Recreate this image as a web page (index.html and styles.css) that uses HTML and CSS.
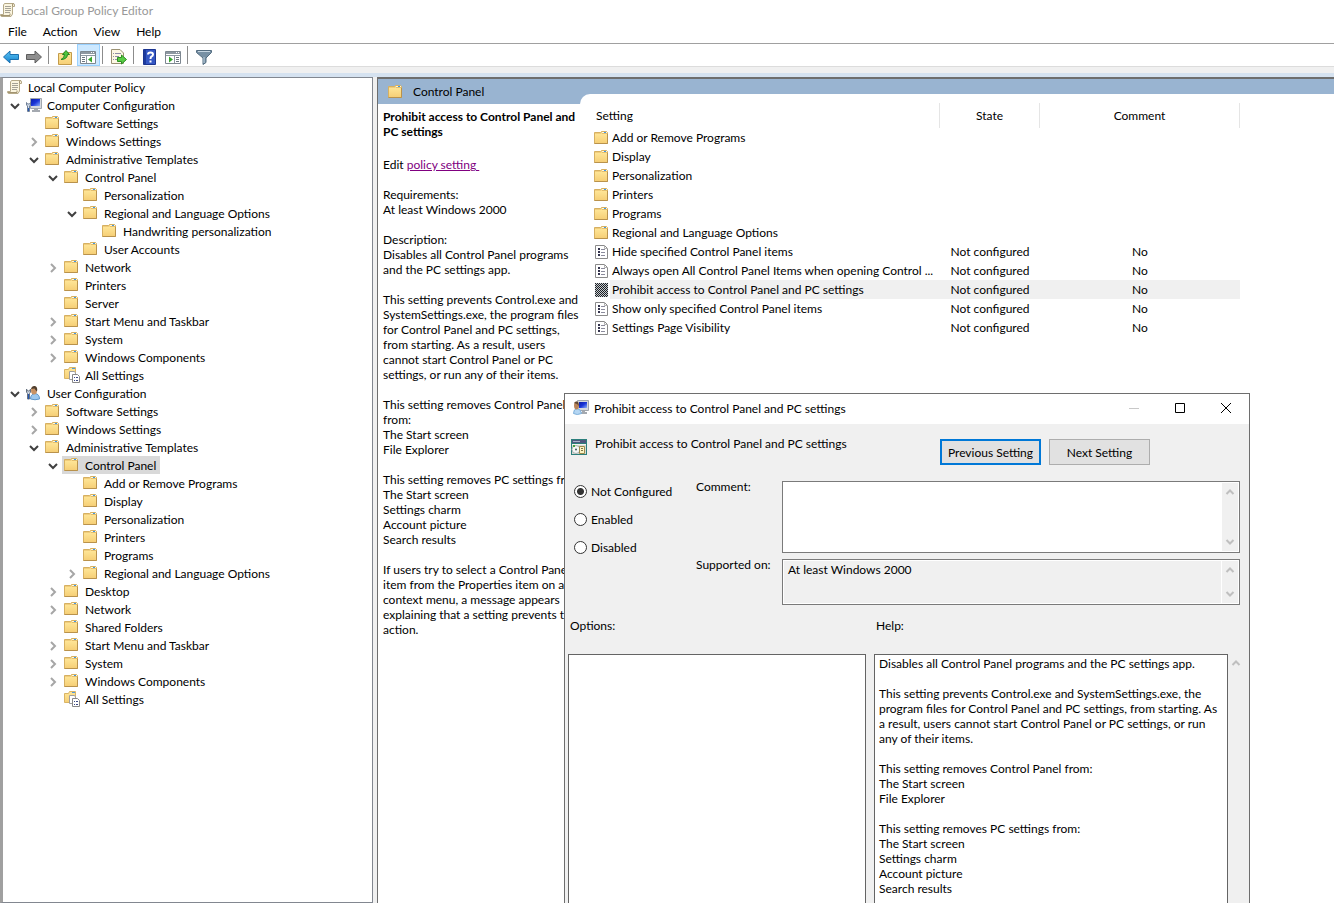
FILE: index.html
```html
<!DOCTYPE html>
<html lang="en">
<head>
    <meta charset="UTF-8">
    <meta name="viewport" content="width=device-width, initial-scale=1.0">
    <title>Local Group Policy Editor</title>
    <link rel="stylesheet" href="styles.css">
</head>
<body>
    <!-- shared icons -->
    <svg class="sprite" aria-hidden="true">
        <defs>
            <linearGradient id="folder-fill" x1="0" y1="0" x2="0" y2="1">
                <stop offset="0" stop-color="#ffe799"/>
                <stop offset="1" stop-color="#f6cf76"/>
            </linearGradient>
            <linearGradient id="blue-fill" x1="0" y1="0" x2="0" y2="1">
                <stop offset="0" stop-color="#5cc4f4"/>
                <stop offset="1" stop-color="#1583cf"/>
            </linearGradient>
            <linearGradient id="screen-fill" x1="0" y1="0" x2="1" y2="1">
                <stop offset="0" stop-color="#0a1fa8"/>
                <stop offset="0.5" stop-color="#1a35d8"/>
                <stop offset="1" stop-color="#8fb4f8"/>
            </linearGradient>
            <pattern id="dither" width="2" height="2" patternUnits="userSpaceOnUse">
                <rect width="1" height="1" fill="#222"/>
                <rect x="1" y="1" width="1" height="1" fill="#222"/>
            </pattern>
        </defs>
        <symbol id="folder" viewBox="0 0 16 16">
            <path d="M0.5 2.5H6.5L7.5 1.500H12.5L13.5 2.500V13.500H0.5Z" fill="#f0cd7c" stroke="#d6b062"/>
            <path d="M8 2H13V3H8Z" fill="#fff8dc"/>
            <path d="M10 2H12V3H10Z" fill="#3f97e6"/>
            <path d="M1 4H7L8 3H13V13H1Z" fill="url(#folder-fill)"/>
            <path d="M8 3.500H13" stroke="#e3bd6c"/>
            <path d="M0.5 13.500H13.5V4" fill="none" stroke="#b9924c"/>
        </symbol>
        <symbol id="scroll" viewBox="0 0 16 16">
            <path d="M4.5 1.5H13Q14.5 1.5 14.5 3V4.5H12.5V12L11 14.5H2Q0.5 14.5 0.5 13V12.5H3.5V3Z" fill="#fbf5df" stroke="#b5a988"/>
            <path d="M12.5 4.5V3Q12.5 1.5 13.5 1.5M1 13.5H10V11.5" fill="none" stroke="#a39470"/>
            <path d="M5 4.5H11M5 6.5H11M5 8.5H11M5 10.5H10" stroke="#a5a296"/>
        </symbol>
        <symbol id="computer" viewBox="0 0 16 16">
            <path d="M4.5 1.5H15.5V11.5H4.500Z" fill="#d5d9de" stroke="#a0a6ad"/>
            <path d="M5 2H14V9H5Z" fill="url(#screen-fill)"/>
            <path d="M8 12H12V13H14V15H6V13H8Z" fill="#a4a9b0"/>
            <path d="M0.5 5.5V8L1.5 9V14.5H3.5V9L4.5 8V5.5L3.500 7H1.500Z" fill="#d5dfec" stroke="#6f7f96"/>
            <path d="M2 11H3V14H2Z" fill="#2457b5"/>
        </symbol>
        <symbol id="user" viewBox="0 0 16 16">
            <path d="M4.5 14Q4.500 9 9 8.500Q13.500 9 13.500 14Q9 15.500 4.500 14Z" fill="#9cc8ee" stroke="#5f96c8"/>
            <ellipse cx="8" cy="5.500" rx="3" ry="4" fill="#c89263"/>
            <path d="M5 4Q6 0.500 9 1Q12 2 11 6.500L9.500 5L8.500 3.500Z" fill="#51402f"/>
            <path d="M0.500 4V7L1.500 8.500V14H3.500V8.500L4.500 7V4L3.500 6H1.500Z" fill="#d2dae6" stroke="#66717f"/>
            <path d="M2 9H3V14H2Z" fill="#2457b5"/>
        </symbol>
        <symbol id="all-settings" viewBox="0 0 16 16">
            <path d="M0.500 2.500H4.500L5.500 0.500H11.500V11.500H0.500Z" fill="url(#folder-fill)" stroke="#d9b465"/>
            <path d="M8 1H11V2H8Z" fill="#4f9be0"/>
            <path d="M5.500 4.500H10.500L11.500 6V12.500H5.500Z" fill="#fff" stroke="#9f9f9f"/>
            <path d="M8.500 7.500H13.500L15.500 9.500V15.500H8.500Z" fill="#fff" stroke="#888"/>
            <path d="M10 10.500H11M12 10.500H14M10 13.500H11M12 13.500H14" stroke="#3e4a86"/>
        </symbol>
        <symbol id="policy" viewBox="0 0 14 16">
            <path d="M1.500 1.500H10.500L13.500 4.500V14.500H1.500Z" fill="#fff" stroke="#8a8a8a"/>
            <path d="M10.500 1.500V4.500H13.500" fill="none" stroke="#b0b0b0"/>
            <path d="M4 5H6M4 8H6M4 11H6" stroke="#33334c" stroke-width="2"/>
            <path d="M7 5.500H11M7 8.500H11M7 11.500H11" stroke="#8b8b9c"/>
        </symbol>
        <symbol id="policy-selected" viewBox="0 0 14 16">
            <path d="M1 1H14V15H1Z" fill="#c4ccd4"/>
            <path d="M1 1H14V15H1Z" fill="url(#dither)"/>
        </symbol>
        <symbol id="open" viewBox="0 0 10 10">
            <path d="M1 3L5 7L9 3" fill="none" stroke="#404040" stroke-width="2"/>
        </symbol>
        <symbol id="closed" viewBox="0 0 10 10">
            <path d="M3 1L7 5L3 9" fill="none" stroke="#a6a6a6" stroke-width="2"/>
        </symbol>
        <symbol id="arrow-up" viewBox="0 0 10 10">
            <path d="M1.500 7L5 3.500L8.500 7" fill="none" stroke="#bfbfbf" stroke-width="2"/>
        </symbol>
        <symbol id="arrow-down" viewBox="0 0 10 10">
            <path d="M1.500 3L5 6.500L8.500 3" fill="none" stroke="#bfbfbf" stroke-width="2"/>
        </symbol>
    </svg>

    <header>
        <div class="titlebar">
            <svg class="icon"><use href="#scroll"/></svg>
            <span>Local Group Policy Editor</span>
        </div>
        <nav class="menu">
            <a href="#">File</a>
            <a href="#">Action</a>
            <a href="#">View</a>
            <a href="#">Help</a>
        </nav>
        <div class="toolbar">
            <button type="button" aria-label="Back">
                <svg class="icon" viewBox="0 0 16 16"><path d="M0.500 8L7 2V5.500H15.500V10.500H7V14Z" fill="url(#blue-fill)" stroke="#1b6fae"/></svg>
            </button>
            <button type="button" aria-label="Forward">
                <svg class="icon" viewBox="0 0 16 16"><path d="M15.500 8L9 2V5.500H0.500V10.500H9V14Z" fill="#8e8e8e" stroke="#5d5d5d"/></svg>
            </button>
            <span class="separator"></span>
            <button type="button" aria-label="Up one level">
                <svg class="icon" viewBox="0 0 16 16">
                    <path d="M1.500 4.500H6L7 3.500H14.500V15.500H1.500Z" fill="url(#folder-fill)" stroke="#c39b4a"/>
                    <path d="M4 10.500Q7.500 9 7.500 5.500H5.500L9 1.500L12.500 5.500H10.500Q10 10.500 4 10.500Z" fill="#4fc53c" stroke="#24851c"/>
                </svg>
            </button>
            <button type="button" class="pressed" aria-label="Show console tree">
                <svg class="icon" viewBox="0 0 16 16">
                    <path d="M0.500 2.500H15.500V14.500H0.500Z" fill="#fff" stroke="#7d8790"/>
                    <path d="M1 3H15V5H1Z" fill="#8d97a1"/>
                    <path d="M11 3.500H12M13 3.500H14" stroke="#fff"/>
                    <path d="M1 6.500H15M6.500 7V14" stroke="#8d97a1"/>
                    <path d="M2 8.500H5M2 10.500H5M2 12.500H5" stroke="#6c7680"/>
                    <path d="M12 7.500V13.500L8 10.500Z" fill="#37a52c"/>
                </svg>
            </button>
            <span class="separator"></span>
            <button type="button" aria-label="Export list">
                <svg class="icon" viewBox="0 0 16 16">
                    <path d="M0.500 0.500H9L12.500 4V14.500H0.500Z" fill="#fdf8e4" stroke="#9b9274"/>
                    <path d="M2 4.500H3M4 4.500H10M2 7.500H3M4 7.500H8M2 10.500H3M4 10.500H8" stroke="#8e8ea6"/>
                    <path d="M6.500 8.500H10.500V6L15.500 10.500L10.500 15V12.500H6.500Z" fill="#58cc46" stroke="#2c9021"/>
                </svg>
            </button>
            <span class="separator"></span>
            <button type="button" aria-label="Help">
                <svg class="icon" viewBox="0 0 16 16">
                    <path d="M1.500 0.500H13.500V15.500H1.500Z" fill="#3457c4" stroke="#1c3590"/>
                    <path d="M2 1H4V15H2Z" fill="#1d3b9e"/>
                    <path d="M6 5.500Q6 3.500 8.500 3.500Q11 3.500 11 5.500Q11 7 9.500 7.500Q8.500 8 8.500 10M8.500 11.500V13.500" fill="none" stroke="#fff" stroke-width="2"/>
                </svg>
            </button>
            <button type="button" aria-label="Show action pane">
                <svg class="icon" viewBox="0 0 16 16">
                    <path d="M0.500 2.500H15.500V14.500H0.500Z" fill="#fff" stroke="#7d8790"/>
                    <path d="M1 3H15V5H1Z" fill="#8d97a1"/>
                    <path d="M11 3.500H12M13 3.500H14" stroke="#fff"/>
                    <path d="M1 6.500H15M9.500 7V14" stroke="#8d97a1"/>
                    <path d="M11 8.500H14M11 10.500H14M11 12.500H14" stroke="#6c7680"/>
                    <path d="M4 7.500V13.500L8 10.500Z" fill="#37a52c"/>
                </svg>
            </button>
            <span class="separator"></span>
            <button type="button" aria-label="Filter">
                <svg class="icon" viewBox="0 0 16 16">
                    <path d="M0.500 1.500H15.500V3.500L10 9V13.500L7 15.500V9L0.500 3.500Z" fill="#7790a4" stroke="#536c80"/>
                    <path d="M2 2.500H14" stroke="#c6d6e2"/>
                    <path d="M8 8V14" stroke="#bdd0de"/>
                </svg>
            </button>
        </div>
    </header>

    <main>
        <nav class="tree" aria-label="Console tree">
            <div class="node"><svg class="icon"><use href="#scroll"/></svg>Local Computer Policy</div>
            <ul>
                <li>
                    <div class="node"><button type="button" aria-label="Collapse"><svg><use href="#open"/></svg></button><svg class="icon"><use href="#computer"/></svg>Computer Configuration</div>
                    <ul>
                        <li><div class="node leaf"><svg class="icon"><use href="#folder"/></svg>Software Settings</div></li>
                        <li><div class="node"><button type="button" aria-label="Expand"><svg><use href="#closed"/></svg></button><svg class="icon"><use href="#folder"/></svg>Windows Settings</div></li>
                        <li>
                            <div class="node"><button type="button" aria-label="Collapse"><svg><use href="#open"/></svg></button><svg class="icon"><use href="#folder"/></svg>Administrative Templates</div>
                            <ul>
                                <li>
                                    <div class="node"><button type="button" aria-label="Collapse"><svg><use href="#open"/></svg></button><svg class="icon"><use href="#folder"/></svg>Control Panel</div>
                                    <ul>
                                        <li><div class="node leaf"><svg class="icon"><use href="#folder"/></svg>Personalization</div></li>
                                        <li>
                                            <div class="node"><button type="button" aria-label="Collapse"><svg><use href="#open"/></svg></button><svg class="icon"><use href="#folder"/></svg>Regional and Language Options</div>
                                            <ul>
                                                <li><div class="node leaf"><svg class="icon"><use href="#folder"/></svg>Handwriting personalization</div></li>
                                            </ul>
                                        </li>
                                        <li><div class="node leaf"><svg class="icon"><use href="#folder"/></svg>User Accounts</div></li>
                                    </ul>
                                </li>
                                <li><div class="node"><button type="button" aria-label="Expand"><svg><use href="#closed"/></svg></button><svg class="icon"><use href="#folder"/></svg>Network</div></li>
                                <li><div class="node leaf"><svg class="icon"><use href="#folder"/></svg>Printers</div></li>
                                <li><div class="node leaf"><svg class="icon"><use href="#folder"/></svg>Server</div></li>
                                <li><div class="node"><button type="button" aria-label="Expand"><svg><use href="#closed"/></svg></button><svg class="icon"><use href="#folder"/></svg>Start Menu and Taskbar</div></li>
                                <li><div class="node"><button type="button" aria-label="Expand"><svg><use href="#closed"/></svg></button><svg class="icon"><use href="#folder"/></svg>System</div></li>
                                <li><div class="node"><button type="button" aria-label="Expand"><svg><use href="#closed"/></svg></button><svg class="icon"><use href="#folder"/></svg>Windows Components</div></li>
                                <li><div class="node leaf"><svg class="icon"><use href="#all-settings"/></svg>All Settings</div></li>
                            </ul>
                        </li>
                    </ul>
                </li>
                <li>
                    <div class="node"><button type="button" aria-label="Collapse"><svg><use href="#open"/></svg></button><svg class="icon"><use href="#user"/></svg>User Configuration</div>
                    <ul>
                        <li><div class="node"><button type="button" aria-label="Expand"><svg><use href="#closed"/></svg></button><svg class="icon"><use href="#folder"/></svg>Software Settings</div></li>
                        <li><div class="node"><button type="button" aria-label="Expand"><svg><use href="#closed"/></svg></button><svg class="icon"><use href="#folder"/></svg>Windows Settings</div></li>
                        <li>
                            <div class="node"><button type="button" aria-label="Collapse"><svg><use href="#open"/></svg></button><svg class="icon"><use href="#folder"/></svg>Administrative Templates</div>
                            <ul>
                                <li>
                                    <div class="node"><button type="button" aria-label="Collapse"><svg><use href="#open"/></svg></button><span class="selected"><svg class="icon"><use href="#folder"/></svg>Control Panel</span></div>
                                    <ul>
                                        <li><div class="node leaf"><svg class="icon"><use href="#folder"/></svg>Add or Remove Programs</div></li>
                                        <li><div class="node leaf"><svg class="icon"><use href="#folder"/></svg>Display</div></li>
                                        <li><div class="node leaf"><svg class="icon"><use href="#folder"/></svg>Personalization</div></li>
                                        <li><div class="node leaf"><svg class="icon"><use href="#folder"/></svg>Printers</div></li>
                                        <li><div class="node leaf"><svg class="icon"><use href="#folder"/></svg>Programs</div></li>
                                        <li><div class="node"><button type="button" aria-label="Expand"><svg><use href="#closed"/></svg></button><svg class="icon"><use href="#folder"/></svg>Regional and Language Options</div></li>
                                    </ul>
                                </li>
                                <li><div class="node"><button type="button" aria-label="Expand"><svg><use href="#closed"/></svg></button><svg class="icon"><use href="#folder"/></svg>Desktop</div></li>
                                <li><div class="node"><button type="button" aria-label="Expand"><svg><use href="#closed"/></svg></button><svg class="icon"><use href="#folder"/></svg>Network</div></li>
                                <li><div class="node leaf"><svg class="icon"><use href="#folder"/></svg>Shared Folders</div></li>
                                <li><div class="node"><button type="button" aria-label="Expand"><svg><use href="#closed"/></svg></button><svg class="icon"><use href="#folder"/></svg>Start Menu and Taskbar</div></li>
                                <li><div class="node"><button type="button" aria-label="Expand"><svg><use href="#closed"/></svg></button><svg class="icon"><use href="#folder"/></svg>System</div></li>
                                <li><div class="node"><button type="button" aria-label="Expand"><svg><use href="#closed"/></svg></button><svg class="icon"><use href="#folder"/></svg>Windows Components</div></li>
                                <li><div class="node leaf"><svg class="icon"><use href="#all-settings"/></svg>All Settings</div></li>
                            </ul>
                        </li>
                    </ul>
                </li>
            </ul>
        </nav>

        <section class="details">
            <div class="extended">
                <div class="pane-title"><svg class="icon"><use href="#folder"/></svg>Control Panel</div>
                <div class="description">
                    <h2>Prohibit access to Control Panel and
PC settings</h2>
                    <p>Edit <a href="#">policy setting </a></p>
                    <p>Requirements:
At least Windows 2000</p>
                    <p>Description:
Disables all Control Panel programs
and the PC settings app.</p>
                    <p>This setting prevents Control.exe and
SystemSettings.exe, the program files
for Control Panel and PC settings,
from starting. As a result, users
cannot start Control Panel or PC
settings, or run any of their items.</p>
                    <p>This setting removes Control Panel
from:
The Start screen
File Explorer</p>
                    <p>This setting removes PC settings from:
The Start screen
Settings charm
Account picture
Search results</p>
                    <p>If users try to select a Control Panel
item from the Properties item on a
context menu, a message appears
explaining that a setting prevents the
action.</p>
                </div>
            </div>
            <div class="list">
                <table>
                    <colgroup>
                        <col class="col-icon">
                        <col class="col-name">
                        <col class="col-state">
                        <col class="col-comment">
                    </colgroup>
                    <thead>
                        <tr>
                            <th colspan="2" class="setting">Setting</th>
                            <th>State</th>
                            <th>Comment</th>
                        </tr>
                    </thead>
                    <tbody>
                        <tr><td class="cell-icon"><svg class="icon"><use href="#folder"/></svg></td><td class="name">Add or Remove Programs</td><td></td><td></td></tr>
                        <tr><td class="cell-icon"><svg class="icon"><use href="#folder"/></svg></td><td class="name">Display</td><td></td><td></td></tr>
                        <tr><td class="cell-icon"><svg class="icon"><use href="#folder"/></svg></td><td class="name">Personalization</td><td></td><td></td></tr>
                        <tr><td class="cell-icon"><svg class="icon"><use href="#folder"/></svg></td><td class="name">Printers</td><td></td><td></td></tr>
                        <tr><td class="cell-icon"><svg class="icon"><use href="#folder"/></svg></td><td class="name">Programs</td><td></td><td></td></tr>
                        <tr><td class="cell-icon"><svg class="icon"><use href="#folder"/></svg></td><td class="name">Regional and Language Options</td><td></td><td></td></tr>
                        <tr><td class="cell-icon"><svg class="icon narrow"><use href="#policy"/></svg></td><td class="name">Hide specified Control Panel items</td><td>Not configured</td><td>No</td></tr>
                        <tr><td class="cell-icon"><svg class="icon narrow"><use href="#policy"/></svg></td><td class="name">Always open All Control Panel Items when opening Control ...</td><td>Not configured</td><td>No</td></tr>
                        <tr class="current"><td class="cell-icon"><svg class="icon narrow"><use href="#policy-selected"/></svg></td><td class="name">Prohibit access to Control Panel and PC settings</td><td>Not configured</td><td>No</td></tr>
                        <tr><td class="cell-icon"><svg class="icon narrow"><use href="#policy"/></svg></td><td class="name">Show only specified Control Panel items</td><td>Not configured</td><td>No</td></tr>
                        <tr><td class="cell-icon"><svg class="icon narrow"><use href="#policy"/></svg></td><td class="name">Settings Page Visibility</td><td>Not configured</td><td>No</td></tr>
                    </tbody>
                </table>
            </div>
        </section>
    </main>

    <div class="dialog" role="dialog" aria-labelledby="dialog-title">
        <div class="dialog-titlebar">
            <svg class="icon" viewBox="0 0 16 16">
                <path d="M4.500 0.500H15.500V10.500H4.500Z" fill="#d5d9de" stroke="#a0a6ad"/>
                <path d="M6 2H14V8H6Z" fill="url(#screen-fill)"/>
                <path d="M9 11H12V12H14V14H8V12H9Z" fill="#a4a9b0"/>
                <path d="M0.500 13.500Q0.500 9 4 8.500Q8 9 8.500 13.500Q4 15.500 0.500 13.500Z" fill="#b4d6f3" stroke="#7fb0da"/>
                <ellipse cx="3.500" cy="5.500" rx="2.500" ry="4" fill="#b98459"/>
                <path d="M1 3Q3 0.500 5 2L6 6L4 4Z" fill="#5d4633"/>
            </svg>
            <span id="dialog-title">Prohibit access to Control Panel and PC settings</span>
            <button type="button" aria-label="Minimize" disabled><svg viewBox="0 0 12 12"><path d="M1 6.500H11" stroke="#c8c8c8"/></svg></button>
            <button type="button" aria-label="Maximize"><svg viewBox="0 0 12 12"><path d="M1.500 1.500H10.500V10.500H1.500Z" fill="none" stroke="#000"/></svg></button>
            <button type="button" aria-label="Close"><svg viewBox="0 0 12 12"><path d="M1 1L11 11M11 1L1 11" stroke="#000"/></svg></button>
        </div>
        <form class="dialog-body">
            <div class="setting-row">
                <svg class="icon" viewBox="0 0 16 16">
                    <path d="M0 0H16V16H0Z" fill="#2c7f7c"/>
                    <path d="M1 1H15V4H1Z" fill="#4f587e"/>
                    <path d="M2 2H9V3H2Z" fill="#aab2cc"/>
                    <path d="M1 5H15V15H1Z" fill="#d9d9d2"/>
                    <path d="M1 5H15V6H1Z" fill="#f4f4f0"/>
                    <circle cx="5" cy="10.500" r="4" fill="#f6f6f6" stroke="#a9b2b2"/>
                    <circle cx="5" cy="10.500" r="1" fill="#3b5a5a"/>
                    <path d="M8.500 7.500H13.500V14.500H8.500Z" fill="#fbf3c3" stroke="#9b8a4c"/>
                    <path d="M10 9.500H12M10 11.500H12" stroke="#7c7448"/>
                    <path d="M2 6H4V8H2Z" fill="#48a13f"/>
                </svg>
                <span class="setting-name">Prohibit access to Control Panel and PC settings</span>
                <button type="button" class="default">Previous Setting</button>
                <button type="button">Next Setting</button>
            </div>

            <div class="state-row">
                <div class="radios">
                    <label><input type="radio" name="state" checked>Not Configured</label>
                    <label><input type="radio" name="state">Enabled</label>
                    <label><input type="radio" name="state">Disabled</label>
                </div>
                <div class="fields">
                    <label for="comment">Comment:</label>
                    <div class="box comment">
                        <textarea id="comment"></textarea>
                        <div class="scrollbar">
                            <svg><use href="#arrow-up"/></svg>
                            <svg><use href="#arrow-down"/></svg>
                        </div>
                    </div>
                    <label for="supported">Supported on:</label>
                    <div class="box supported">
                        <textarea id="supported" readonly>At least Windows 2000</textarea>
                        <div class="scrollbar">
                            <svg><use href="#arrow-up"/></svg>
                            <svg><use href="#arrow-down"/></svg>
                        </div>
                    </div>
                </div>
            </div>

            <div class="panels">
                <h3>Options:</h3>
                <h3>Help:</h3>
                <div class="panel"></div>
                <div class="help">
                    <div class="panel">
                        <p>Disables all Control Panel programs and the PC settings app.</p>
                        <p>This setting prevents Control.exe and SystemSettings.exe, the
program files for Control Panel and PC settings, from starting. As
a result, users cannot start Control Panel or PC settings, or run
any of their items.</p>
                        <p>This setting removes Control Panel from:
The Start screen
File Explorer</p>
                        <p>This setting removes PC settings from:
The Start screen
Settings charm
Account picture
Search results</p>
                    </div>
                    <div class="scrollbar">
                        <svg><use href="#arrow-up"/></svg>
                    </div>
                </div>
            </div>
        </form>
    </div>
</body>
</html>
```

FILE: styles.css
```css
* {
    box-sizing: border-box;
}

body {
    display: flex;
    flex-direction: column;
    height: 100vh;
    margin: 0;
    overflow: hidden;
    position: relative;
    background-color: #fff;
    color: #000;
    font-family: "Segoe UI", Lato, sans-serif;
    font-size: 12px;
    line-height: 15px;
}

h2,
h3,
p,
ul {
    margin: 0;
    padding: 0;
}

ul {
    list-style: none;
}

button,
input,
textarea {
    margin: 0;
    padding: 0;
    border: none;
    background: none;
    color: inherit;
    font: inherit;
}

.sprite {
    position: absolute;
    width: 0;
    height: 0;
}

.icon {
    display: block;
    flex: none;
    width: 16px;
    height: 16px;
}

.icon.narrow {
    width: 14px;
}

/* window header */
.titlebar {
    display: flex;
    align-items: center;
    gap: 5px;
    height: 20px;
    color: #999;
}

.menu {
    display: flex;
    align-items: center;
    gap: 16px;
    height: 23px;
    padding-left: 8px;
}

.menu a {
    color: #000;
    text-decoration: none;
}

.toolbar {
    display: flex;
    align-items: center;
    height: 24px;
    border-top: 1px solid #a0a0a0;
    border-bottom: 1px solid #dcdcdc;
}

.toolbar button {
    display: flex;
    align-items: center;
    justify-content: center;
    width: 23px;
    height: 22px;
    padding: 3px 1px 0 0;
}

.toolbar .pressed {
    background-color: #cce8ff;
    border: 1px solid #99d1ff;
}

.separator {
    width: 1px;
    height: 18px;
    margin: 0 5px 0 2px;
    background-color: #8c8c8c;
}

/* panes */
main {
    display: flex;
    flex: 1;
    gap: 4px;
    min-height: 0;
    padding-top: 10px;
    background: linear-gradient(#f0f0f0 6px, #d5e2f0 6px, #d5e2f0 10px, #f0f0f0 10px);
}

.tree {
    flex: none;
    width: 373px;
    padding-left: 4px;
    background-color: #fff;
    border: 1px solid #828790;
    border-left: 3px solid #a0a0a0;
    white-space: nowrap;
}

.tree ul ul {
    padding-left: 19px;
}

.node {
    display: flex;
    align-items: center;
    gap: 5px;
    height: 18px;
}

.node.leaf {
    padding-left: 19px;
}

.node button {
    display: flex;
    align-items: center;
    width: 14px;
    height: 16px;
    padding: 2px 0 0 3px;
}

.node button svg {
    width: 10px;
    height: 10px;
}

.selected {
    display: flex;
    align-items: center;
    gap: 5px;
    height: 18px;
    margin-left: -2px;
    padding: 0 4px 0 2px;
    background-color: #d9d9d9;
}

.details {
    display: flex;
    flex: 1;
    min-width: 0;
    background-color: #99b4d1;
    border-top: 2px solid #6e6e6e;
    border-left: 1px solid #6e6e6e;
}

.extended {
    display: flex;
    flex-direction: column;
    flex: none;
    width: 202px;
}

.pane-title {
    display: flex;
    align-items: center;
    gap: 9px;
    height: 25px;
    padding-left: 10px;
}

.description {
    flex: 1;
    padding: 5px 0 0 5px;
    background-color: #fff;
}

.description h2 {
    margin-bottom: 18px;
    font-size: 12px;
    white-space: pre;
}

.description p {
    margin-bottom: 15px;
    white-space: pre;
}

.description a {
    color: #800080;
}

.list {
    flex: 1;
    min-width: 0;
    margin-top: 15px;
    padding: 9px 0 0 10px;
    background-color: #fff;
    border-top-left-radius: 10px;
}

table {
    width: 650px;
    table-layout: fixed;
    border-collapse: separate;
    border-spacing: 0;
}

.col-icon {
    width: 20px;
}

.col-name {
    width: 330px;
}

.col-state {
    width: 100px;
}

.col-comment {
    width: 200px;
}

th {
    height: 25px;
    padding: 0;
    border-right: 1px solid #e5e5e5;
    font-weight: normal;
}

.setting {
    padding-left: 6px;
    text-align: left;
}

td {
    height: 19px;
    padding: 0;
    text-align: center;
    white-space: nowrap;
}

.cell-icon {
    padding-left: 4px;
}

td.name {
    padding-left: 2px;
    text-align: left;
}

.current td {
    background-color: #f0f0f0;
}

.current .cell-icon {
    background-color: #fff;
}

/* policy dialog, lies over the editor */
.dialog {
    display: flex;
    flex-direction: column;
    position: absolute;
    top: 393px;
    bottom: 0;
    left: 564px;
    width: 686px;
    background-color: #f0f0f0;
    border: 1px solid #6e6e6e;
    border-bottom: none;
    overflow: hidden;
}

.dialog-titlebar {
    display: flex;
    flex: none;
    align-items: center;
    height: 30px;
    padding: 0 0 2px 8px;
    background-color: #fff;
}

.dialog-titlebar span {
    flex: 1;
    padding-left: 5px;
}

.dialog-titlebar button {
    display: flex;
    align-items: center;
    justify-content: center;
    width: 46px;
    height: 28px;
}

.dialog-titlebar button svg {
    width: 12px;
    height: 12px;
}

.dialog-body {
    display: flex;
    flex: 1;
    flex-direction: column;
    min-height: 0;
    padding: 15px 5px 0 3px;
}

.setting-row {
    display: flex;
    gap: 8px;
    padding: 0 94px 0 3px;
}

.setting-name {
    flex: 1;
    margin-top: -3px;
}

.setting-row button {
    width: 101px;
    height: 26px;
    background-color: #e1e1e1;
    border: 1px solid #adadad;
}

.setting-row .default {
    border: 2px solid #0078d7;
}

.state-row {
    display: grid;
    grid-template-columns: 122px 1fr;
    padding: 16px 4px 0 6px;
}

.radios {
    display: flex;
    flex-direction: column;
    gap: 8px;
}

.radios label {
    display: flex;
    align-items: center;
    gap: 4px;
    height: 20px;
}

.radios input {
    appearance: none;
    width: 13px;
    height: 13px;
    border: 1px solid #333;
    border-radius: 50%;
    background-color: #fff;
}

.radios input:checked {
    background-image: radial-gradient(circle, #333 3px, #fff 4px);
}

.fields {
    display: grid;
    grid-template-columns: 86px 1fr;
    row-gap: 6px;
}

.fields label {
    margin-top: -2px;
}

.box {
    display: flex;
    padding: 1px;
    background-color: #fff;
    border: 1px solid #7a7a7a;
}

.box textarea {
    flex: 1;
    min-width: 0;
    padding: 1px 4px;
    outline: none;
    resize: none;
    overflow: hidden;
}

.comment {
    height: 72px;
}

.supported {
    height: 46px;
}

.supported textarea {
    margin-right: 1px;
    background-color: #f0f0f0;
}

.scrollbar {
    display: flex;
    flex-direction: column;
    justify-content: space-between;
    align-items: center;
    width: 16px;
    padding: 4px 0;
    background-color: #f0f0f0;
}

.scrollbar svg {
    width: 10px;
    height: 10px;
}

.panels {
    display: grid;
    flex: 1;
    grid-template-columns: minmax(0, 298fr) minmax(0, 370fr);
    grid-template-rows: 36px 1fr;
    column-gap: 8px;
    min-height: 0;
    padding-top: 13px;
}

.panels h3 {
    padding-left: 2px;
    font-size: 12px;
    font-weight: normal;
}

.panel {
    flex: 1;
    min-width: 0;
    padding: 1px 4px;
    background-color: #fff;
    border: 1px solid #646464;
    border-bottom: none;
}

.panel p {
    margin-bottom: 15px;
    white-space: pre;
}

.help {
    display: flex;
}
```
